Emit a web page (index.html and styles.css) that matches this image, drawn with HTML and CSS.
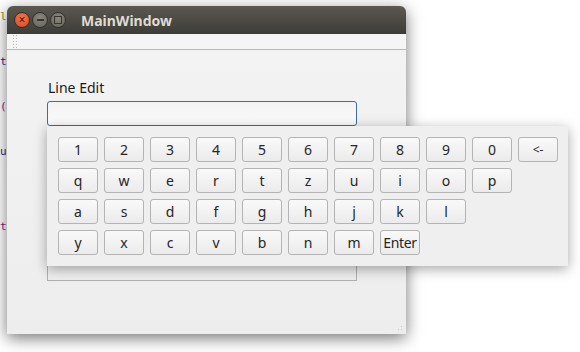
FILE: index.html
```html
<!DOCTYPE html>
<html lang="en">
<head>
  <meta charset="UTF-8" />
  <title>MainWindow</title>
  <link rel="stylesheet" href="styles.css">
</head>
<body>

<div class="desktop">
  <pre class="editor"><span class="olive">l</span>


<span class="blue">t</span>


<span class="purple">(</span>


<span class="blue">u</span>




<span class="purple">t</span></pre>

  <div class="window">
    <div class="titlebar">
      <span class="wbtn close">&#215;</span>
      <span class="wbtn min"><i class="bar"></i></span>
      <span class="wbtn max"><i class="box"></i></span>
      <span class="title">MainWindow</span>
    </div>
    <div class="menubar"><span class="handle"></span></div>
    <div class="body">
      <label class="label">Line Edit</label>
      <div class="lineedit"></div>
      <div class="frame"></div>
    </div>
    <span class="grip"></span>
  </div>

  <div class="keyboard">
    <button>1</button><button>2</button><button>3</button><button>4</button><button>5</button>
    <button>6</button><button>7</button><button>8</button><button>9</button><button>0</button>
    <button class="small">&lt;-</button>

    <button>q</button><button>w</button><button>e</button><button>r</button><button>t</button>
    <button>z</button><button>u</button><button>i</button><button>o</button><button>p</button>
    <span></span>

    <button>a</button><button>s</button><button>d</button><button>f</button><button>g</button>
    <button>h</button><button>j</button><button>k</button><button>l</button>
    <span></span><span></span>

    <button>y</button><button>x</button><button>c</button><button>v</button><button>b</button>
    <button>n</button><button>m</button><button class="enter">Enter</button>
  </div>
</div>

</body>
</html>
```

FILE: styles.css
```css
html, body {
  margin: 0;
  padding: 0;
  background: #ffffff;
  overflow: hidden;
}
.desktop {
  position: relative;
  width: 580px;
  height: 352px;
  font-family: 'Noto Sans', 'DejaVu Sans', sans-serif;
}
.editor {
  margin: 0;
  padding-top: 9px;
  font-family: 'DejaVu Sans Mono', monospace;
  font-size: 11px;
  line-height: 15px;
}
.olive { color: #a09010; }
.blue { color: #2b2b9a; }
.purple { color: #8a1a8a; }

.window {
  position: absolute;
  left: 7px;
  top: 6px;
  width: 399px;
  height: 328px;
  border-radius: 6px 6px 0 0;
  background: #efefef;
  box-shadow: 0 4px 16px rgba(0, 0, 0, 0.55);
}
.titlebar {
  height: 28px;
  display: flex;
  align-items: center;
  padding-left: 7px;
  border-radius: 6px 6px 0 0;
  background: linear-gradient(#5b5850, #3e3c37);
}
.wbtn {
  width: 16px;
  height: 16px;
  border-radius: 50%;
  margin-right: 2px;
  box-sizing: border-box;
  border: 1px solid #33322e;
  display: flex;
  align-items: center;
  justify-content: center;
  background: radial-gradient(circle at 50% 35%, #8a877f, #65625b);
}
.close {
  background: radial-gradient(circle at 50% 35%, #f4784f, #d8461e);
  color: #3a1a10;
  font-size: 12px;
  line-height: 1;
}
.bar {
  width: 7px;
  height: 1.5px;
  background: #36352f;
}
.box {
  width: 6px;
  height: 6px;
  border: 1px solid #36352f;
}
.title {
  margin-left: 13px;
  color: #dfdbd2;
  font-weight: bold;
  font-size: 14px;
}
.menubar {
  height: 15px;
  background: #f5f5f5;
  border-bottom: 1px solid #b9b9b9;
  padding-left: 5px;
}
.handle {
  display: block;
  width: 5px;
  height: 14px;
  background-image: radial-gradient(circle, #b8b8b8 0.8px, transparent 1px);
  background-size: 3px 3px;
}
.body {
  padding: 28px 0 0 40px;
  background: linear-gradient(#f3f3f3, #ededed);
  height: 256px;
}
.label {
  display: block;
  font-size: 14px;
  color: #1a1a1a;
  line-height: 20px;
  margin-bottom: 3px;
  padding-left: 1px;
}
.lineedit {
  width: 310px;
  height: 25px;
  box-sizing: border-box;
  border: 1px solid #3c6e9e;
  border-radius: 3px;
  background: linear-gradient(#f2f2f2, #fdfdfd);
}
.frame {
  width: 310px;
  height: 155px;
  box-sizing: border-box;
  border: 1px solid #b0b0b0;
}
.grip {
  position: absolute;
  right: 2px;
  bottom: 2px;
  width: 10px;
  height: 10px;
  background-image: radial-gradient(circle, #c2c2c2 0.8px, transparent 1px);
  background-size: 3px 3px;
  clip-path: polygon(100% 0, 100% 100%, 0 100%);
}

.keyboard {
  position: absolute;
  left: 47px;
  top: 126px;
  width: 521px;
  height: 140px;
  box-sizing: border-box;
  padding: 11px 10px 11px 11px;
  background: #efefef;
  box-shadow: 0 3px 12px rgba(0, 0, 0, 0.35);
  display: grid;
  grid-template-columns: repeat(11, 40px);
  grid-auto-rows: 25px;
  gap: 6px;
}
.keyboard button {
  margin: 0;
  padding: 0;
  font-family: 'Noto Sans', 'DejaVu Sans', sans-serif;
  font-size: 14px;
  color: #262626;
  border: 1px solid #b4b4b4;
  border-radius: 3px;
  background: linear-gradient(#f9f9f9, #ebebeb);
}
.keyboard .small { font-size: 12px; }
.keyboard .enter { letter-spacing: -0.3px; }
```
